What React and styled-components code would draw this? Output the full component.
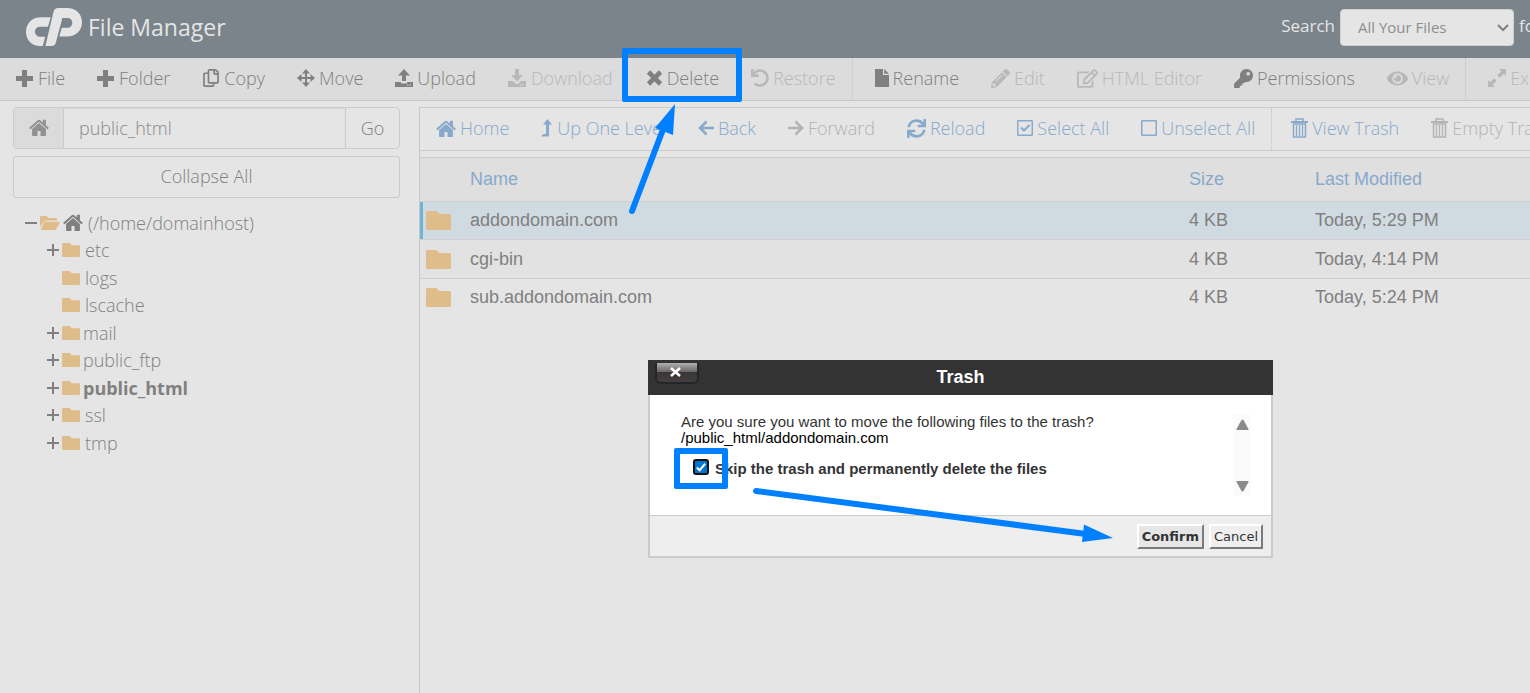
import React from 'react'
import styled, { createGlobalStyle } from 'styled-components'
import { FaEye, FaKey, FaPencilAlt, FaRegCopy, FaRegEdit, FaSync, FaUndo } from 'react-icons/fa'

const SANS = '"Open Sans", "Noto Sans", sans-serif'
const ARIAL = '"Liberation Sans", Arial, sans-serif'

/* icons */

const CpLogo = () => (
  <svg width="56" height="38" viewBox="26 8 56 38" fill="#e5e5e5" aria-hidden="true">
    <path d="M41 17.3h9.7L48 26.8h-7.4c-3.400 0-5.600 2-5.600 4.900s2.200 5 5.600 5h4.600L42.800 46H40c-8.300 0-14-6-14-14.300S32.200 17.300 41 17.300z" />
    <path d="M58.200 8H67c9 0 15 6 15 14.200S75.800 36.600 67 36.600h-7.600l2.400-8.800h5.600c2.900 0 4.900-2.100 4.900-5s-2-4.700-4.900-4.700h-5l-6.600 24.600c-.6 2.200-2 3.300-4.200 3.300h-6.200L53.600 11.600C54.300 9.200 55.700 8 58.200 8z" />
  </svg>
)

const PlusIcon = () => (
  <svg width="18" height="17" viewBox="0 0 18 17" fill="currentColor">
    <path d="M6 0h5v6h6v5h-6v6H6v-6H0V6h6z" />
  </svg>
)

const HomeIcon = () => (
  <svg width="20" height="17" viewBox="64 200 1664 1340" preserveAspectRatio="none" fill="currentColor">
    <path d="M1472 992v480q0 26-19 45t-45 19h-384v-384h-256v384h-384q-26 0-45-19t-19-45v-480q0-1 .5-3t.5-3l575-474 575 474q1 2 1 6zm223-69l-62 74q-8 9-21 11h-3q-13 0-21-7l-692-577-692 577q-12 8-24 7-13-2-21-11l-62-74q-8-10-7-23.500t11-21.500l719-599q32-26 76-26t76 26l244 204v-195q0-14 9-23t23-9h192q14 0 23 9t9 23v408l219 182q10 8 11 21.500t-7 23.500z" />
  </svg>
)

const MoveIcon = () => (
  <svg width="18" height="18" viewBox="0 0 18 18" fill="currentColor">
    <path d="M9 0l4 4.500h-3v3.500h3.500V5L18 9l-4.500 4v-3H10v3.500h3L9 18l-4-4.500h3V10H4.500v3L0 9l4.500-4v3H8V4.500H5z" />
  </svg>
)

const UploadIcon = () => (
  <svg width="18" height="18" viewBox="0 0 18 18" fill="currentColor">
    <path d="M9 0l6 6.500h-4V12H7V6.500H3zM0 13h5.500l1 1.500h5l1-1.500H18v5H0zm12 2.500v1h1.500v-1zm2.500 0v1H16v-1z" fillRule="evenodd" />
  </svg>
)

const DownloadIcon = () => (
  <svg width="19" height="18" viewBox="0 0 19 18" fill="currentColor">
    <path d="M7 0h4v6h4l-6 6.500L3 6h4zM0 12h5l3 3h2l3-3h5v6H0zm12 3.500v1h1.500v-1zm2.500 0v1H16v-1z" fillRule="evenodd" />
  </svg>
)

const TimesIcon = () => (
  <svg width="18" height="16" viewBox="0 0 18 16" fill="none" stroke="currentColor" strokeWidth="4.600">
    <path d="M3.500 2l12 12M15.500 2l-12 12" />
  </svg>
)

const FileIcon = () => (
  <svg width="14" height="18" viewBox="0 0 14 18" fill="currentColor">
    <path d="M0 0h8v6h6v12H0zM9.200 0L14 4.800H9.200z" />
  </svg>
)

const ExpandIcon = () => (
  <svg width="18" height="18" viewBox="0 0 18 18" fill="currentColor">
    <path d="M11 0h7v7l-2.300-2.300-4 4L9.300 6.300l4-4zM0 11l2.300 2.300 4-4 2.400 2.400-4 4L7 18H0z" />
  </svg>
)

const LevelUpIcon = () => (
  <svg width="12" height="18" viewBox="0 0 12 18" fill="currentColor">
    <path d="M6.500 0L11 5.500H8V17.500H0l2.500-2.500H5V5.500H2z" />
  </svg>
)

const ArrowLeftIcon = () => (
  <svg width="16" height="16" viewBox="0 0 16 16" fill="none" stroke="currentColor" strokeWidth="2.500">
    <path d="M8.500 1.500L2 8l6.500 6.500M2 8h14" />
  </svg>
)

const ArrowRightIcon = () => (
  <svg width="16" height="16" viewBox="0 0 16 16" fill="none" stroke="currentColor" strokeWidth="2.500">
    <path d="M7.500 1.500L14 8l-6.500 6.500M14 8H0" />
  </svg>
)

const BoxIcon = ({ checked }) => (
  <svg width="16" height="16" viewBox="0 0 16 16" fill="none" stroke="currentColor" strokeWidth="1.500">
    <rect x=".75" y=".75" width="14.500" height="14.500" rx=".5" />
    {checked && <path d="M4 7.500l3 3 5.500-5.500" strokeWidth="2" />}
  </svg>
)

const TrashIcon = () => (
  <svg width="17" height="20" viewBox="0 0 17 20" fill="none" stroke="currentColor">
    <path d="M0 4h17" strokeWidth="2" />
    <path d="M5 3.500V1h7v2.500" strokeWidth="1.500" />
    <path d="M2.500 6v13h12V6z" strokeWidth="1.500" />
    <path d="M5.500 7v11M8.500 7v11M11.500 7v11" strokeWidth="1.300" />
  </svg>
)

const FolderIcon = ({ width, height }) => (
  <svg width={width} height={height} viewBox="0 0 25 19" preserveAspectRatio="none" fill="#dfbd8a">
    <path d="M1.500 0h9L13.500 3H23.500q1.500 0 1.500 1.500v13q0 1.500-1.500 1.500h-22Q0 19 0 17.500v-16Q0 0 1.500 0z" />
  </svg>
)

const FolderOpenIcon = () => (
  <svg width="20" height="14" viewBox="0 0 20 14" fill="#dfbd8a">
    <path d="M0 11.500V1q0-1 1-1h5.500l2 2H16q1 0 1 1v1.500H6.500Q4.500 4.500 3.500 6z" />
    <path d="M5 5.700h14.500q.8 0 .3 1l-3.500 6q-.7 1.300-2 1.300H.8l3-7.300q.4-1 1.200-1z" />
  </svg>
)

const Caret = ({ down }) => (
  <svg width="13" height="11" viewBox="0 0 13 11" fill="#8b8b8b">
    <path d={down ? 'M1 0h11q1 0 .5 1L7.500 10q-1 1-2 0L.5 1Q0 0 1 0z' : 'M1 11h11q1 0 .5-1L7.500 1q-1-1-2 0L.5 10Q0 11 1 11z'} />
  </svg>
)

/* data */

const FILE_TOOLS = [
  { label: 'File', icon: <PlusIcon /> },
  { label: 'Folder', icon: <PlusIcon /> },
  { label: 'Copy', icon: <FaRegCopy size={18} /> },
  { label: 'Move', icon: <MoveIcon /> },
  { label: 'Upload', icon: <UploadIcon /> },
  { label: 'Download', icon: <DownloadIcon />, disabled: true },
  { label: 'Delete', icon: <TimesIcon />, marked: true },
  { label: 'Restore', icon: <FaUndo size={18} />, disabled: true },
  { label: 'Rename', icon: <FileIcon />, divider: true },
  { label: 'Edit', icon: <FaPencilAlt size={19} />, disabled: true },
  { label: 'HTML Editor', icon: <FaRegEdit size={21} />, disabled: true },
  { label: 'Permissions', icon: <FaKey size={19} /> },
  { label: 'View', icon: <FaEye size={21} />, disabled: true },
  { label: 'Expand', icon: <ExpandIcon />, disabled: true, divider: true },
]

const NAV_TOOLS = [
  { label: 'Home', icon: <HomeIcon /> },
  { label: 'Up One Level', icon: <LevelUpIcon /> },
  { label: 'Back', icon: <ArrowLeftIcon /> },
  { label: 'Forward', icon: <ArrowRightIcon />, disabled: true },
  { label: 'Reload', icon: <FaSync size={19} /> },
  { label: 'Select All', icon: <BoxIcon checked /> },
  { label: 'Unselect All', icon: <BoxIcon /> },
  { label: 'View Trash', icon: <TrashIcon />, divider: true },
  { label: 'Empty Trash', icon: <TrashIcon />, disabled: true },
]

const TREE = [
  { name: 'etc', children: true },
  { name: 'logs' },
  { name: 'lscache' },
  { name: 'mail', children: true, tight: true },
  { name: 'public_ftp', children: true, tight: true },
  { name: 'public_html', children: true, tight: true, current: true },
  { name: 'ssl', children: true },
  { name: 'tmp', children: true },
]

const FILES = [
  { name: 'addondomain.com', size: '4 KB', modified: 'Today, 5:29 PM', selected: true },
  { name: 'cgi-bin', size: '4 KB', modified: 'Today, 4:14 PM' },
  { name: 'sub.addondomain.com', size: '4 KB', modified: 'Today, 5:24 PM' },
]

const App = () => {
  return (
    <Page>
      <GlobalStyle />
      <Header>
        <CpLogo />
        <Title>File Manager</Title>
        <Search>
          <label htmlFor="scope">Search</label>
          <SelectWrap>
            <Select id="scope" defaultValue="all">
              <option value="all">All Your Files</option>
            </Select>
            <svg width="12" height="8" viewBox="0 0 12 8" fill="none" stroke="#808080" strokeWidth="2">
              <path d="M1 1l5 5 5-5" />
            </svg>
          </SelectWrap>
          <SearchFor>for</SearchFor>
        </Search>
      </Header>

      <Toolbar>
        {FILE_TOOLS.map((tool) => (
          <Tool key={tool.label} type="button" disabled={tool.disabled} $divider={tool.divider}>
            {tool.icon}
            {tool.label}
            {tool.marked && <ToolMark />}
          </Tool>
        ))}
      </Toolbar>

      <Body>
        <Sidebar>
          <PathBar>
            <PathHome type="button" aria-label="Home"><HomeIcon /></PathHome>
            <PathInput aria-label="Path" defaultValue="public_html" />
            <GoButton type="button">Go</GoButton>
          </PathBar>
          <CollapseButton type="button">Collapse All</CollapseButton>
          <Tree>
            <TreeRow $root>
              <Toggle>
                <path d="M0 6h12" />
              </Toggle>
              <FolderOpenIcon />
              <HomeIcon />
              <TreeLink href="#home">(/home/domainhost)</TreeLink>
            </TreeRow>
            {TREE.map((item) => (
              <TreeRow key={item.name}>
                <Toggle>{item.children && <path d="M0 6h12M6 0v12" />}</Toggle>
                <FolderIcon width="18" height="14" />
                <TreeLink href={'#' + item.name} $current={item.current} $tight={item.tight}>
                  {item.name}
                </TreeLink>
              </TreeRow>
            ))}
          </Tree>
        </Sidebar>

        <Main>
          <NavBar>
            {NAV_TOOLS.map((tool) => (
              <NavTool key={tool.label} type="button" disabled={tool.disabled} $divider={tool.divider}>
                {tool.icon}
                {tool.label}
              </NavTool>
            ))}
          </NavBar>
          <FileTable>
            <thead>
              <tr>
                <IconHead aria-label="Type" />
                <th>Name</th>
                <SizeHead>Size</SizeHead>
                <DateHead>Last Modified</DateHead>
              </tr>
            </thead>
            <tbody>
              {FILES.map((file) => (
                <FileRow key={file.name} $selected={file.selected}>
                  <IconCell><FolderIcon width="25" height="19" /></IconCell>
                  <td>{file.name}</td>
                  <td>{file.size}</td>
                  <td>{file.modified}</td>
                </FileRow>
              ))}
            </tbody>
          </FileTable>
        </Main>
      </Body>

      <Dialog role="dialog" aria-labelledby="dialog-title">
        <DialogHead>
          <CloseButton type="button" aria-label="Close">
            <svg width="11" height="10" viewBox="0 0 11 10" stroke="#fff" strokeWidth="2.500">
              <path d="M1 1l9 8M10 1l-9 8" />
            </svg>
          </CloseButton>
          <DialogTitle id="dialog-title">Trash</DialogTitle>
        </DialogHead>
        <DialogBody>
          <div>
            <p>Are you sure you want to move the following files to the trash?</p>
            <FilePath>/public_html/addondomain.com</FilePath>
            <SkipLabel>
              <SkipBox type="checkbox" defaultChecked />
              Skip the trash and permanently delete the files
              <CheckMark />
            </SkipLabel>
          </div>
          <ScrollTrack>
            <Caret />
            <Caret down />
          </ScrollTrack>
        </DialogBody>
        <DialogFoot>
          <DialogButton type="button" $primary>Confirm</DialogButton>
          <DialogButton type="button">Cancel</DialogButton>
        </DialogFoot>
        <ConfirmArrow width="364" height="60" viewBox="0 0 364 60">
          <path d="M6 6L336 49" stroke="#0080ff" strokeWidth="6" strokeLinecap="round" />
          <path d="M334 39.500L363 53L332 57z" fill="#0080ff" />
        </ConfirmArrow>
      </Dialog>
      <DeleteArrow width="52" height="112" viewBox="0 0 52 112">
        <path d="M6 107L36 28" stroke="#0080ff" strokeWidth="6" strokeLinecap="round" />
        <path d="M49 0L47 31L29 24z" fill="#0080ff" />
      </DeleteArrow>
    </Page>
  )
}

const GlobalStyle = createGlobalStyle`
  * {
    box-sizing: border-box;
  }
  body {
    margin: 0;
    background: #e5e5e5;
    color: #808080;
    font-family: ${SANS};
    font-size: 18px;
    font-weight: 300;
  }
  button, input, select {
    font: inherit;
    color: inherit;
    margin: 0;
  }
  p {
    margin: 0;
  }
  svg {
    flex: none;
  }
`

const Page = styled.div`
  position: relative;
  display: flex;
  flex-direction: column;
  min-height: 100vh;
  overflow: hidden;
`

const Header = styled.header`
  display: flex;
  align-items: center;
  height: 58px;
  padding: 0 0 4px 26px;
  background: #7b838b;
  color: #e5e5e5;
`

const Title = styled.h1`
  margin: 0 0 0 6px;
  font-size: 23px;
  font-weight: 400;
  line-height: 32px;
`

const Search = styled.form`
  display: flex;
  align-items: center;
  gap: 5px;
  margin-left: auto;
  font-size: 17px;
  font-weight: 400;

  label {
    padding-bottom: 3px;
  }
`

const SelectWrap = styled.div`
  position: relative;

  svg {
    position: absolute;
    right: 5px;
    top: 15px;
    pointer-events: none;
  }
`

const Select = styled.select`
  appearance: none;
  width: 174px;
  height: 37px;
  padding: 0 24px 0 17px;
  border: 1px solid #d0d0d0;
  border-radius: 4px;
  background: #e5e5e5;
  color: #8e8e8e;
  font-size: 15px;
`

/* the rest of the search form runs past the window edge */
const SearchFor = styled.span`
  width: 11px;
  padding-bottom: 3px;
  overflow: hidden;
`

const Toolbar = styled.nav`
  display: flex;
  height: 43px;
  background: #dcdcdc;
  border-bottom: 1px solid #c4c8cb;
`

const Tool = styled.button`
  position: relative;
  display: flex;
  flex: none;
  align-items: center;
  gap: 4px;
  padding: 0 16px 2px;
  padding-left: ${(p) => (p.$divider ? '22px' : '16px')};
  border: 0;
  border-left: ${(p) => (p.$divider ? '1px dotted #c4c4c4' : '0')};
  background: none;
  white-space: nowrap;

  &:disabled {
    color: #b8b8b8;
  }
`

const Marker = styled.span`
  position: absolute;
  border: 6px solid #0080ff;
  border-radius: 2px;
  pointer-events: none;
`

const ToolMark = styled(Marker)`
  z-index: 2;
  inset: -10px -7px -2px -7px;
`

const Body = styled.div`
  display: flex;
  flex: 1;
  padding-top: 6px;
`

const Sidebar = styled.aside`
  flex: none;
  width: 419px;
  padding: 0 19px 0 13px;
`

const PathBar = styled.div`
  display: flex;
  height: 42px;
  border: 1px solid #cbcbcb;
  border-radius: 4px;
  overflow: hidden;
`

const PathHome = styled.button`
  display: flex;
  align-items: center;
  justify-content: center;
  width: 50px;
  padding: 0 0 2px;
  border: 0;
  border-right: 1px solid #cbcbcb;
  background: #dbdbdb;
  color: #919191;
`

const PathInput = styled.input`
  flex: 1;
  min-width: 0;
  padding: 0 15px;
  border: 0;
  background: none;
  box-shadow: inset 0 1px 1px #d8d8d8;
  color: #8a8a8a;
`

const GoButton = styled.button`
  width: 54px;
  padding: 0;
  border: 0;
  border-left: 1px solid #cbcbcb;
  background: none;
`

const CollapseButton = styled.button`
  width: 100%;
  height: 42px;
  margin-top: 7px;
  padding: 0 0 2px;
  border: 1px solid #cbcbcb;
  border-radius: 3px;
  background: none;
`

const Tree = styled.ul`
  margin: 11px 0 0;
  padding: 0;
  list-style: none;
`

const TreeRow = styled.li`
  display: flex;
  align-items: center;
  gap: 3px;
  height: 27px;
  padding-left: ${(p) => (p.$root ? '12px' : '34px')};

  &:nth-child(even) {
    height: 28px;
  }
`

const Toggle = styled.svg.attrs({ viewBox: '0 0 12 12', width: 12, height: 12 })`
  fill: none;
  stroke: currentColor;
  stroke-width: 2;
`

const TreeLink = styled.a`
  margin-left: ${(p) => (p.$tight ? '0' : '2px')};
  color: inherit;
  text-decoration: none;
  font-weight: ${(p) => (p.$current ? 700 : 300)};
`

const Main = styled.main`
  flex: 1;
  min-width: 0;
  border-left: 1px solid #c8c8c8;
`

const NavBar = styled.nav`
  display: flex;
  height: 44px;
  border: solid #cbcbcb;
  border-width: 1px 0;
  overflow: hidden;
`

const NavTool = styled(Tool)`
  padding-left: ${(p) => (p.$divider ? '19px' : '16px')};
  color: #88a9cb;

  &:disabled {
    color: #b3b3b3;
  }
`

const FileTable = styled.table`
  width: 100%;
  margin-top: 6px;
  border-collapse: separate;
  border-spacing: 0;
  table-layout: fixed;
  font-family: ${ARIAL};
  font-weight: 400;

  th,
  td {
    height: 38px;
    padding: 0 10px;
    border-bottom: 1px solid #cfcfcf;
    text-align: left;
  }
  th {
    height: 45px;
    border-top: 1px solid #cbcbcb;
    background: #dfdfdf;
    color: #88a9cb;
    font-weight: 400;
  }
  tr:nth-child(even) td {
    height: 39px;
    background: #e2e2e2;
  }
  tbody tr:last-child td {
    height: 36px;
    border-bottom: 0;
  }
`

const IconHead = styled.th`
  width: 40px;
`

const SizeHead = styled.th`
  width: 126px;
`

const DateHead = styled.th`
  width: 225px;
`

const FileRow = styled.tr`
  background: ${(p) => (p.$selected ? '#d0dbe1' : 'transparent')};
  box-shadow: ${(p) => (p.$selected ? 'inset 3px 0 #6fb5d3' : 'none')};
`

const IconCell = styled.td`
  && {
    padding: 0 0 0 6px;
  }
  svg {
    display: block;
  }
`

const Dialog = styled.section`
  position: absolute;
  top: 360px;
  left: 648px;
  width: 625px;
  border: 2px solid #cbcbcb;
  border-top: 0;
  background: #fff;
  color: #333;
  font-family: ${ARIAL};
  font-size: 15px;
  font-weight: 400;
  line-height: 16px;
`

const DialogHead = styled.header`
  display: flex;
  align-items: center;
  height: 35px;
  margin: 0 -2px;
  padding: 0 7px 2px;
  background: #333;
`

const CloseButton = styled.button`
  display: flex;
  align-items: center;
  justify-content: center;
  align-self: flex-start;
  width: 44px;
  height: 21px;
  margin-top: 3px;
  padding: 0 4px 1px 0;
  border: solid #222628;
  border-width: 0 2px 2px;
  border-radius: 0 0 6px 6px;
  background: linear-gradient(#b0b0b0, #6a6868 45%, #3a3636 50%, #443e3e);
`

const DialogTitle = styled.h2`
  flex: 1;
  margin: 0 44px 0 0;
  color: #fff;
  font-size: 18px;
  line-height: 24px;
  text-align: center;
`

const DialogBody = styled.div`
  display: flex;
  justify-content: space-between;
  height: 120px;
  padding: 19px 20px 19px 31px;
`

const FilePath = styled.p`
  color: #000;
`

const SkipLabel = styled.label`
  position: relative;
  display: flex;
  align-items: center;
  gap: 6px;
  margin-top: 15px;
  padding-left: 12px;
  font-weight: 700;
`

const SkipBox = styled.input`
  appearance: none;
  width: 16px;
  height: 16px;
  margin-top: -4px;
  border: 2px solid #111;
  border-radius: 3px;
  background: #0075d0 url("data:image/svg+xml,%3Csvg xmlns='http://www.w3.org/2000/svg' viewBox='0 0 13 13'%3E%3Cpath d='M2 7l3 3 6-7' fill='none' stroke='white' stroke-width='2.200'/%3E%3C/svg%3E") center / 100%;
`

const CheckMark = styled(Marker)`
  top: -13px;
  left: -7px;
  width: 54px;
  height: 41px;
`

const ScrollTrack = styled.div`
  display: flex;
  flex-direction: column;
  align-items: center;
  justify-content: space-between;
  width: 18px;
  padding: 5px 0 4px;
  background: #fbfbfb;
`

const DialogFoot = styled.footer`
  display: flex;
  align-items: center;
  justify-content: flex-end;
  gap: 5px;
  height: 41px;
  padding-right: 8px;
  border-top: 1px solid #cbcbcb;
  background: #eee;
`

const DialogButton = styled.button`
  height: 25px;
  padding: 1px 3px 0;
  border: 2px solid;
  border-color: #fff #7a7a7a #7a7a7a #fff;
  background: ${(p) => (p.$primary ? '#e6e6e6' : '#efefef')};
  font-family: "DejaVu Sans", Verdana, sans-serif;
  font-size: 13px;
  font-weight: ${(p) => (p.$primary ? 700 : 400)};
`

const Arrow = styled.svg`
  position: absolute;
  fill: none;
  pointer-events: none;
`

const ConfirmArrow = styled(Arrow)`
  top: 125px;
  left: 100px;
`

const DeleteArrow = styled(Arrow)`
  top: 104px;
  left: 626px;
`

export default App
